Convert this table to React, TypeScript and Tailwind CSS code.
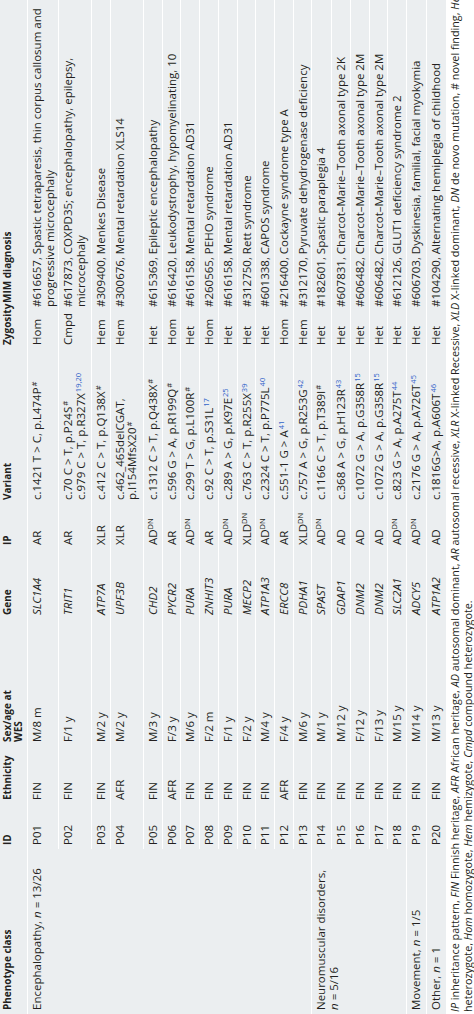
import React from "react";

const Ref = ({ children }: { children: React.ReactNode }) => (
  <span className="relative -top-[4px] text-[7.5px] leading-none text-[#2f63c9] ml-[1px]">{children}</span>
);
const Nov = () => <span className="relative -top-[4px] text-[7.5px] leading-none ml-[1px]">#</span>;
const DN = ({ base }: { base: string }) => (
  <span>
    {base}
    <span className="relative -top-[4px] text-[7.5px] leading-none">DN</span>
  </span>
);
const G = ({ children }: { children: React.ReactNode }) => <i>{children}</i>;

type Row = {
  id: string;
  eth: string;
  sex: string;
  gene: string;
  ip: React.ReactNode;
  variant: React.ReactNode;
  zyg: string;
  mim: React.ReactNode;
  h: string;
};

const rowCols = "grid grid-cols-[45px_58px_127px_70px_45px_155px_38px_1fr]";

const enc: Row[] = [
  {
    id: "P01", eth: "FIN", sex: "M/8 m", gene: "SLC1A4", ip: "AR",
    variant: <>c.1421 T &gt; C, p.L474P<Nov /></>, zyg: "Hom",
    mim: <>#616657, Spastic tetraparesis, thin corpus callosum and<br />progressive microcephaly</>,
    h: "h-[30px]",
  },
  {
    id: "P02", eth: "FIN", sex: "F/1 y", gene: "TRIT1", ip: "AR",
    variant: <>c.70 C &gt; T, p.P24S<Nov /><br />c.979 C &gt; T, p.R327X<Ref>19,20</Ref></>, zyg: "Cmpd",
    mim: <>#617873, COXPD35; encephalopathy, epilepsy,<br />microcephaly</>,
    h: "h-[33px]",
  },
  {
    id: "P03", eth: "FIN", sex: "M/2 y", gene: "ATP7A", ip: "XLR",
    variant: <>c.412 C &gt; T, p.Q138X<Nov /></>, zyg: "Hem",
    mim: <>#309400, Menkes Disease</>, h: "h-[18.5px]",
  },
  {
    id: "P04", eth: "AFR", sex: "M/2 y", gene: "UPF3B", ip: "XLR",
    variant: <>c.462_465delCGAT,<br />p.I154MfsX20<Nov /></>, zyg: "Hem",
    mim: <>#300676, Mental retardation XLS14</>, h: "h-[33.5px]",
  },
  {
    id: "P05", eth: "FIN", sex: "M/3 y", gene: "CHD2", ip: <DN base="AD" />,
    variant: <>c.1312 C &gt; T, p.Q438X<Nov /></>, zyg: "Het",
    mim: <>#615369, Epileptic encephalopathy</>, h: "h-[18.73px]",
  },
  {
    id: "P06", eth: "AFR", sex: "F/3 y", gene: "PYCR2", ip: "AR",
    variant: <>c.596 G &gt; A, p.R199Q<Nov /></>, zyg: "Hom",
    mim: <>#616420, Leukodystrophy, hypomyelinating, 10</>, h: "h-[18.73px]",
  },
  {
    id: "P07", eth: "FIN", sex: "M/6 y", gene: "PURA", ip: <DN base="AD" />,
    variant: <>c.299 T &gt; G, p.L100R<Nov /></>, zyg: "Het",
    mim: <>#616158, Mental retardation AD31</>, h: "h-[18.73px]",
  },
  {
    id: "P08", eth: "FIN", sex: "F/2 m", gene: "ZNHIT3", ip: "AR",
    variant: <>c.92 C &gt; T, p.S31L<Ref>17</Ref></>, zyg: "Hom",
    mim: <>#260565, PEHO syndrome</>, h: "h-[18.73px]",
  },
  {
    id: "P09", eth: "FIN", sex: "F/1 y", gene: "PURA", ip: <DN base="AD" />,
    variant: <>c.289 A &gt; G, p.K97E<Ref>25</Ref></>, zyg: "Het",
    mim: <>#616158, Mental retardation AD31</>, h: "h-[18.73px]",
  },
  {
    id: "P10", eth: "FIN", sex: "F/2 y", gene: "MECP2", ip: <DN base="XLD" />,
    variant: <>c.763 C &gt; T, p.R255X<Ref>39</Ref></>, zyg: "Het",
    mim: <>#312750, Rett syndrome</>, h: "h-[18.73px]",
  },
  {
    id: "P11", eth: "FIN", sex: "M/4 y", gene: "ATP1A3", ip: <DN base="AD" />,
    variant: <>c.2324 C &gt; T, p.P775L<Ref>40</Ref></>, zyg: "Het",
    mim: <>#601338, CAPOS syndrome</>, h: "h-[18.73px]",
  },
  {
    id: "P12", eth: "AFR", sex: "F/4 y", gene: "ERCC8", ip: "AR",
    variant: <>c.551-1 G &gt; A<Ref>41</Ref></>, zyg: "Hom",
    mim: <>#216400, Cockayne syndrome type A</>, h: "h-[18.73px]",
  },
  {
    id: "P13", eth: "FIN", sex: "M/6 y", gene: "PDHA1", ip: <DN base="XLD" />,
    variant: <>c.757 A &gt; G, p.R253G<Ref>42</Ref></>, zyg: "Hem",
    mim: <>#312170, Pyruvate dehydrogenase deficiency</>, h: "h-[18.73px]",
  },
];

const neuro: Row[] = [
  {
    id: "P14", eth: "FIN", sex: "M/1 y", gene: "SPAST", ip: <DN base="AD" />,
    variant: <>c.1166 C &gt; T, p.T389I<Nov /></>, zyg: "Het",
    mim: <>#182601, Spastic paraplegia 4</>, h: "h-[18.73px]",
  },
  {
    id: "P15", eth: "FIN", sex: "M/12 y", gene: "GDAP1", ip: "AD",
    variant: <>c.368 A &gt; G, p.H123R<Ref>43</Ref></>, zyg: "Het",
    mim: <>#607831, Charcot–Marie–Tooth axonal type 2K</>, h: "h-[18.73px]",
  },
  {
    id: "P16", eth: "FIN", sex: "F/12 y", gene: "DNM2", ip: "AD",
    variant: <>c.1072 G &gt; A, p.G358R<Ref>15</Ref></>, zyg: "Het",
    mim: <>#606482, Charcot–Marie–Tooth axonal type 2M</>, h: "h-[18.73px]",
  },
  {
    id: "P17", eth: "FIN", sex: "F/13 y", gene: "DNM2", ip: "AD",
    variant: <>c.1072 G &gt; A, p.G358R<Ref>15</Ref></>, zyg: "Het",
    mim: <>#606482, Charcot–Marie–Tooth axonal type 2M</>, h: "h-[18.73px]",
  },
  {
    id: "P18", eth: "FIN", sex: "M/15 y", gene: "SLC2A1", ip: <DN base="AD" />,
    variant: <>c.823 G &gt; A, p.A275T<Ref>44</Ref></>, zyg: "Het",
    mim: <>#612126, GLUT1 deficiency syndrome 2</>, h: "h-[18.73px]",
  },
];

const movement: Row[] = [
  {
    id: "P19", eth: "FIN", sex: "M/14 y", gene: "ADCY5", ip: <DN base="AD" />,
    variant: <>c.2176 G &gt; A, p.A726T<Ref>45</Ref></>, zyg: "Het",
    mim: <>#606703, Dyskinesia, familial, facial myokymia</>, h: "h-[18.73px]",
  },
];

const other: Row[] = [
  {
    id: "P20", eth: "FIN", sex: "M/13 y", gene: "ATP1A2", ip: "AD",
    variant: <>c.1816G&gt;A, p.A606T<Ref>46</Ref></>, zyg: "Het",
    mim: <>#104290, Alternating hemiplegia of childhood</>, h: "h-[18.73px]",
  },
];

const cell = "pl-[4px] pt-[3px] whitespace-nowrap";

function PatientRow({ r, first }: { r: Row; first: boolean }) {
  return (
    <div className={`${rowCols} ${r.h} ${first ? "" : "border-t border-white"}`}>
      <div className={cell}>{r.id}</div>
      <div className={cell}>{r.eth}</div>
      <div className={cell}>{r.sex}</div>
      <div className={cell}>
        <G>{r.gene}</G>
      </div>
      <div className={cell}>{r.ip}</div>
      <div className={cell}>{r.variant}</div>
      <div className={cell}>{r.zyg}</div>
      <div className={cell}>{r.mim}</div>
    </div>
  );
}

function Group({ label, rows }: { label: React.ReactNode; rows: Row[] }) {
  return (
    <div className="flex border-t border-white">
      <div className="w-[165px] shrink-0 pl-[4px] pt-[3px] whitespace-nowrap">{label}</div>
      <div className="flex-1 flex flex-col">
        {rows.map((r, i) => (
          <PatientRow key={r.id} r={r} first={i === 0} />
        ))}
      </div>
    </div>
  );
}

export default function App() {
  return (
    <div className="relative w-[474px] h-[1014px] overflow-hidden bg-white">
      <div className="absolute left-0 top-0 w-[1014px] h-[474px] origin-top-left -rotate-90 translate-y-[1014px] font-['Open_Sans',sans-serif] text-[11.5px] leading-[12.5px] text-[#231f20]">
        <div className="bg-[#ebeef0] flex flex-col">
          <div className="grid grid-cols-[165px_45px_58px_127px_70px_45px_155px_38px_1fr] h-[27px] font-bold text-[10px] leading-[11px]">
            <div className="pl-[4px] pt-[2px] whitespace-nowrap">Phenotype class</div>
            <div className="pl-[4px] pt-[2px]">ID</div>
            <div className="pl-[4px] pt-[2px]">Ethnicity</div>
            <div className="pl-[4px] pt-[2px] whitespace-nowrap">
              Sex/age at
              <br />
              WES
            </div>
            <div className="pl-[4px] pt-[2px]">Gene</div>
            <div className="pl-[4px] pt-[2px]">IP</div>
            <div className="pl-[4px] pt-[2px]">Variant</div>
            <div className="pl-[4px] pt-[2px]">Zygosity</div>
            <div className="pl-[8px] pt-[2px] whitespace-nowrap">MIM diagnosis</div>
          </div>
          <Group label={<>Encephalopathy, <i>n</i> = 13/26</>} rows={enc} />
          <Group
            label={
              <>
                Neuromuscular disorders,
                <br />
                <i>n</i> = 5/16
              </>
            }
            rows={neuro}
          />
          <Group label={<>Movement, <i>n</i> = 1/5</>} rows={movement} />
          <Group label={<>Other, <i>n</i> = 1</>} rows={other} />
        </div>
        <div className="pt-[2px] pl-[2px] leading-[13px] text-[10.8px] whitespace-nowrap">
          <div>
            <i>IP</i> inheritance pattern, <i>FIN</i> Finnish heritage, <i>AFR</i> African heritage, <i>AD</i> autosomal
            dominant, <i>AR</i> autosomal recessive, <i>XLR</i> X-linked Recessive, <i>XLD</i> X-linked dominant,{" "}
            <i>DN</i> de novo mutation, # novel finding, <i>Het</i>
          </div>
          <div>
            heterozygote, <i>Hom</i> homozygote, <i>Hem</i> hemizygote, <i>Cmpd</i> compound heterozygote.
          </div>
        </div>
      </div>
    </div>
  );
}
